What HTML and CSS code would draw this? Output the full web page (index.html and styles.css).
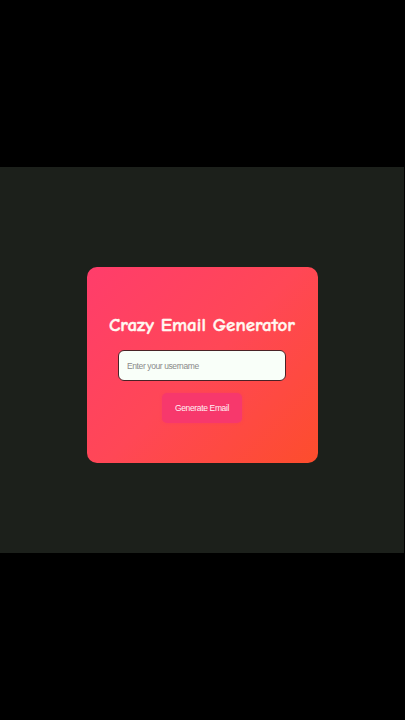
FILE: index.html
```html
<!DOCTYPE html>
<html lang="en">
<head>
<meta charset="utf-8">
<title>Crazy Email Generator</title>
<link rel="stylesheet" href="styles.css">
</head>
<body>
<main class="stage">
  <section class="card">
    <h1 class="title">Crazy Email Generator</h1>
    <input class="username" type="text" placeholder="Enter your username">
    <button class="generate" type="button">Generate Email</button>
  </section>
</main>
</body>
</html>
```

FILE: styles.css
```css
html, body {
  margin: 0;
  padding: 0;
  background: #000;
}
body {
  width: 405px;
  height: 720px;
  padding-top: 167px;
  box-sizing: border-box;
}
.stage {
  width: 404px;
  height: 386px;
  background: #1c201b;
  display: flex;
  justify-content: center;
  align-items: flex-start;
  padding-top: 100px;
  box-sizing: border-box;
}
.card {
  width: 231px;
  height: 196px;
  box-sizing: border-box;
  border-radius: 10px;
  background: linear-gradient(135deg, #ff3d6b 0%, #ff4756 50%, #fd4d2c 100%);
  display: flex;
  flex-direction: column;
  align-items: center;
  padding-top: 46px;
}
.title {
  margin: 0;
  font-family: "Comic Sans MS", "Comic Neue", "Lato", sans-serif;
  font-weight: 700;
  font-size: 19px;
  line-height: 24px;
  color: #fff8f0;
  white-space: nowrap;
  -webkit-text-stroke: 0.4px #fff8f0;
}
.username {
  margin-top: 13px;
  width: 168px;
  height: 31px;
  box-sizing: border-box;
  border: 1.5px solid #4a2226;
  border-radius: 6px;
  background: #f9fff9;
  padding: 0 8px;
  font-family: "Liberation Sans", Arial, sans-serif;
  font-size: 8.5px;
  letter-spacing: -0.4px;
  color: #333;
  outline: none;
}
.username::placeholder {
  color: #8a8a8a;
}
.generate {
  margin-top: 12px;
  width: 80px;
  height: 30px;
  border: none;
  border-radius: 5px;
  background: #f7386c;
  box-shadow: 0 0 3px rgba(247, 56, 108, 0.6);
  color: #fff0f4;
  font-family: "Liberation Sans", Arial, sans-serif;
  font-size: 8.5px;
  letter-spacing: -0.35px;
  padding: 0;
  cursor: pointer;
}
```
